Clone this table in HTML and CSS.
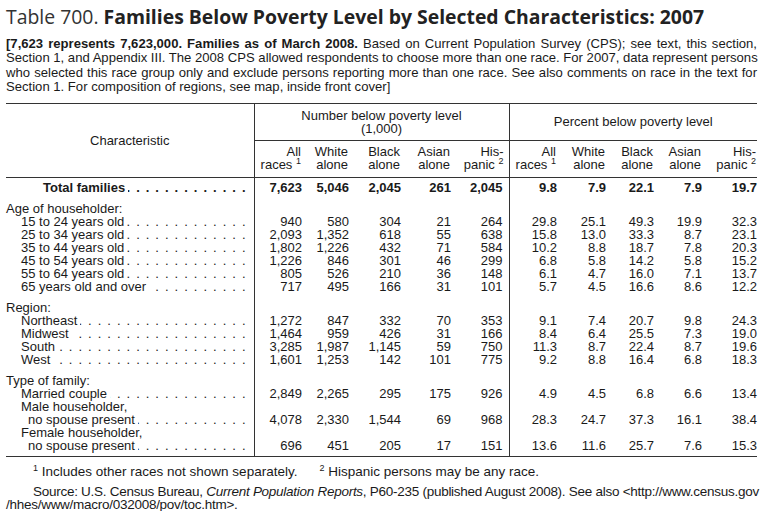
FILE: index.html
```html
<!DOCTYPE html>
<html>
	<head>
		<meta charset="UTF-8">
		<title>Table 700</title>
		<link rel="stylesheet" href="styles.css">
	</head>
	<body>
		<div class="page">
			<h1 class="title"><span class="tno">Table 700.</span> <b>Families Below Poverty Level by Selected Characteristics: 2007</b></h1>

			<p class="headnote">
				<span class="ln"><b>[7,623 represents 7,623,000. Families as of March 2008.</b> Based on Current Population Survey (CPS); see text, this section,</span>
				<span class="ln">Section 1, and Appendix III. The 2008 CPS allowed respondents to choose more than one race. For 2007, data represent persons</span>
				<span class="ln">who selected this race group only and exclude persons reporting more than one race. See also comments on race in the text for</span>
				<span class="last">Section 1. For composition of regions, see map, inside front cover]</span>
			</p>

			<table class="data">
				<colgroup>
					<col class="c-char">
					<col class="c-n1"><col class="c-n2"><col class="c-n3"><col class="c-n4"><col class="c-n5">
					<col class="c-p1"><col class="c-p2"><col class="c-p3"><col class="c-p4"><col class="c-p5">
				</colgroup>
				<thead>
					<tr class="hd1">
						<th class="char" rowspan="2">Characteristic</th>
						<th class="grp" colspan="5">Number below poverty level<br>(1,000)</th>
						<th class="grp" colspan="5">Percent below poverty level</th>
					</tr>
					<tr class="hd2">
						<th class="first">All<br>races <sup>1</sup></th>
						<th>White<br>alone</th>
						<th>Black<br>alone</th>
						<th>Asian<br>alone</th>
						<th class="hisp">His-<br>panic <sup>2</sup></th>
						<th class="first">All<br>races <sup>1</sup></th>
						<th>White<br>alone</th>
						<th>Black<br>alone</th>
						<th>Asian<br>alone</th>
						<th class="hisp end">His-<br>panic <sup>2</sup></th>
					</tr>
				</thead>
				<tbody>
					<tr class="total">
						<td class="lbl ind-t"><span class="txt">Total families</span><span class="lead"></span></td>
						<td class="first">7,623</td><td>5,046</td><td>2,045</td><td>261</td><td class="hisp">2,045</td>
						<td class="first">9.8</td><td>7.9</td><td>22.1</td><td>7.9</td><td class="end">19.7</td>
					</tr>

					<tr class="sec gap">
						<td class="lbl">Age of householder:</td>
						<td class="first"></td><td></td><td></td><td></td><td class="hisp"></td>
						<td class="first"></td><td></td><td></td><td></td><td class="end"></td>
					</tr>
					<tr>
						<td class="lbl ind"><span class="txt">15 to 24 years old</span><span class="lead"></span></td>
						<td class="first">940</td><td>580</td><td>304</td><td>21</td><td class="hisp">264</td>
						<td class="first">29.8</td><td>25.1</td><td>49.3</td><td>19.9</td><td class="end">32.3</td>
					</tr>
					<tr>
						<td class="lbl ind"><span class="txt">25 to 34 years old</span><span class="lead"></span></td>
						<td class="first">2,093</td><td>1,352</td><td>618</td><td>55</td><td class="hisp">638</td>
						<td class="first">15.8</td><td>13.0</td><td>33.3</td><td>8.7</td><td class="end">23.1</td>
					</tr>
					<tr>
						<td class="lbl ind"><span class="txt">35 to 44 years old</span><span class="lead"></span></td>
						<td class="first">1,802</td><td>1,226</td><td>432</td><td>71</td><td class="hisp">584</td>
						<td class="first">10.2</td><td>8.8</td><td>18.7</td><td>7.8</td><td class="end">20.3</td>
					</tr>
					<tr>
						<td class="lbl ind"><span class="txt">45 to 54 years old</span><span class="lead"></span></td>
						<td class="first">1,226</td><td>846</td><td>301</td><td>46</td><td class="hisp">299</td>
						<td class="first">6.8</td><td>5.8</td><td>14.2</td><td>5.8</td><td class="end">15.2</td>
					</tr>
					<tr>
						<td class="lbl ind"><span class="txt">55 to 64 years old</span><span class="lead"></span></td>
						<td class="first">805</td><td>526</td><td>210</td><td>36</td><td class="hisp">148</td>
						<td class="first">6.1</td><td>4.7</td><td>16.0</td><td>7.1</td><td class="end">13.7</td>
					</tr>
					<tr>
						<td class="lbl ind"><span class="txt">65 years old and over</span><span class="lead"></span></td>
						<td class="first">717</td><td>495</td><td>166</td><td>31</td><td class="hisp">101</td>
						<td class="first">5.7</td><td>4.5</td><td>16.6</td><td>8.6</td><td class="end">12.2</td>
					</tr>

					<tr class="sec gap">
						<td class="lbl">Region:</td>
						<td class="first"></td><td></td><td></td><td></td><td class="hisp"></td>
						<td class="first"></td><td></td><td></td><td></td><td class="end"></td>
					</tr>
					<tr>
						<td class="lbl ind"><span class="txt">Northeast</span><span class="lead"></span></td>
						<td class="first">1,272</td><td>847</td><td>332</td><td>70</td><td class="hisp">353</td>
						<td class="first">9.1</td><td>7.4</td><td>20.7</td><td>9.8</td><td class="end">24.3</td>
					</tr>
					<tr>
						<td class="lbl ind"><span class="txt">Midwest</span><span class="lead"></span></td>
						<td class="first">1,464</td><td>959</td><td>426</td><td>31</td><td class="hisp">166</td>
						<td class="first">8.4</td><td>6.4</td><td>25.5</td><td>7.3</td><td class="end">19.0</td>
					</tr>
					<tr>
						<td class="lbl ind"><span class="txt">South</span><span class="lead"></span></td>
						<td class="first">3,285</td><td>1,987</td><td>1,145</td><td>59</td><td class="hisp">750</td>
						<td class="first">11.3</td><td>8.7</td><td>22.4</td><td>8.7</td><td class="end">19.6</td>
					</tr>
					<tr>
						<td class="lbl ind"><span class="txt">West</span><span class="lead"></span></td>
						<td class="first">1,601</td><td>1,253</td><td>142</td><td>101</td><td class="hisp">775</td>
						<td class="first">9.2</td><td>8.8</td><td>16.4</td><td>6.8</td><td class="end">18.3</td>
					</tr>

					<tr class="sec gap">
						<td class="lbl">Type of family:</td>
						<td class="first"></td><td></td><td></td><td></td><td class="hisp"></td>
						<td class="first"></td><td></td><td></td><td></td><td class="end"></td>
					</tr>
					<tr>
						<td class="lbl ind"><span class="txt">Married couple</span><span class="lead"></span></td>
						<td class="first">2,849</td><td>2,265</td><td>295</td><td>175</td><td class="hisp">926</td>
						<td class="first">4.9</td><td>4.5</td><td>6.8</td><td>6.6</td><td class="end">13.4</td>
					</tr>
					<tr>
						<td class="lbl ind">Male householder,</td>
						<td class="first"></td><td></td><td></td><td></td><td class="hisp"></td>
						<td class="first"></td><td></td><td></td><td></td><td class="end"></td>
					</tr>
					<tr>
						<td class="lbl ind2"><span class="txt">no spouse present</span><span class="lead"></span></td>
						<td class="first">4,078</td><td>2,330</td><td>1,544</td><td>69</td><td class="hisp">968</td>
						<td class="first">28.3</td><td>24.7</td><td>37.3</td><td>16.1</td><td class="end">38.4</td>
					</tr>
					<tr>
						<td class="lbl ind">Female householder,</td>
						<td class="first"></td><td></td><td></td><td></td><td class="hisp"></td>
						<td class="first"></td><td></td><td></td><td></td><td class="end"></td>
					</tr>
					<tr class="lastrow">
						<td class="lbl ind2"><span class="txt">no spouse present</span><span class="lead"></span></td>
						<td class="first">696</td><td>451</td><td>205</td><td>17</td><td class="hisp">151</td>
						<td class="first">13.6</td><td>11.6</td><td>25.7</td><td>7.6</td><td class="end">15.3</td>
					</tr>
				</tbody>
			</table>

			<p class="notes"><sup>1</sup> Includes other races not shown separately.<span class="sep"></span><sup>2</sup> Hispanic persons may be any race.</p>

			<p class="source">
				<span class="ln">Source: U.S. Census Bureau, <i>Current Population Reports</i>, P60-235 (published August 2008). See also &lt;http://www.census.gov</span>
				<span class="last">/hhes/www/macro/032008/pov/toc.htm&gt;.</span>
			</p>
		</div>
	</body>
</html>
```

FILE: styles.css
```css
*{
	margin: 0;
	padding: 0;
}
body{
	background: #fff;
	color: #1a1a1a;
	font-family: "Liberation Sans", Arial, sans-serif;
}
.page{
	width: 751px;
	padding: 6px 0 0 6px;
}

/* title */
.title{
	font-family: "Open Sans", "DejaVu Sans", sans-serif;
	font-size: 19.4px;
	line-height: 22px;
	font-weight: normal;
	color: #222;
	white-space: nowrap;
}
.title .tno{
	color: #333;
}
.title b{
	font-weight: 700;
}

/* headnote, every line but the last is stretched edge to edge */
.headnote{
	margin-top: 9px;
	font-size: 13.1px;
	line-height: 14.3px;
}
.headnote .ln,
.source .ln{
	display: block;
	text-align: justify;
	text-align-last: justify;
	white-space: nowrap;
}
.headnote .last,
.source .last{
	display: block;
}

/* table */
.data{
	margin-top: 9px;
	width: 751px;
	table-layout: fixed;
	border-collapse: collapse;
	font-size: 13px;
	line-height: 13px;
	border-top: 1px solid #333;
	border-bottom: 1px solid #333;
}
.c-char{ width: 248px; }
.c-n1{ width: 51px; }
.c-n2{ width: 47px; }
.c-n3{ width: 52px; }
.c-n4{ width: 50px; }
.c-n5{ width: 55px; }
.c-p1{ width: 51px; }
.c-p2{ width: 49px; }
.c-p3{ width: 48px; }
.c-p4{ width: 48px; }
.c-p5{ width: 52px; }

.data th{
	font-weight: normal;
	text-align: right;
	white-space: nowrap;
}
.data thead{
	border-bottom: 1px solid #333;
}
.data .hd1 th{
	height: 35px;
	vertical-align: middle;
	text-align: center;
	line-height: 12.5px;
	padding-top: 1px;
}
.data .hd1 th.grp{
	border-left: 1px solid #333;
	border-bottom: 1px solid #333;
}
.data .hd1 th.char{
	padding-top: 2px;
}
.data .hd2 th{
	height: 30px;
	vertical-align: bottom;
	line-height: 12.5px;
	padding: 0 4px 6px 0;
}
.data .hd2 th.hisp{
	padding-right: 5px;
}
.data .hd2 th.end{
	padding-right: 1px;
}
.data sup{
	font-size: 9px;
	line-height: 0;
	vertical-align: 5px;
}

.data td{
	text-align: right;
	white-space: nowrap;
	padding: 0 3px 0 0;
	vertical-align: top;
	height: 13px;
}
.data .first{
	border-left: 1px solid #333;
}
.data td.hisp{
	padding-right: 6px;
}
.data td.end{
	padding-right: 0;
}

.data .total td{
	font-weight: bold;
	padding-top: 3px;
	height: 13px;
}
.data .gap td{
	padding-top: 8px;
}
.data .lastrow td{
	padding-bottom: 4px;
}

/* labels with dot leaders */
.data td.lbl{
	text-align: left;
	padding-right: 2px;
}
.data td.lbl.ind-t,
.data td.lbl.ind,
.data td.lbl.ind2{
	display: flex;
}
.data td.ind-t{ padding-left: 37px; }
.data td.ind{ padding-left: 15px; }
.data td.ind2{ padding-left: 22px; }
.data .txt{
	flex: none;
}
.data .lead{
	flex: 1;
	overflow: hidden;
	direction: rtl;
	white-space: nowrap;
	letter-spacing: 6px;
	margin-left: 3px;
}
.data .lead::before{
	content: "........................................";
}

/* footnotes */
.notes{
	margin-top: 7px;
	padding-left: 27px;
	font-size: 13.5px;
	line-height: 15px;
}
.notes sup,
.source sup{
	font-size: 9px;
	vertical-align: 5px;
	line-height: 0;
}
.notes .sep{
	display: inline-block;
	width: 22px;
}
.source{
	margin-top: 6px;
	font-size: 13.5px;
	line-height: 13px;
	letter-spacing: -0.27px;
}
.source .ln{
	text-indent: 27px;
}
```
